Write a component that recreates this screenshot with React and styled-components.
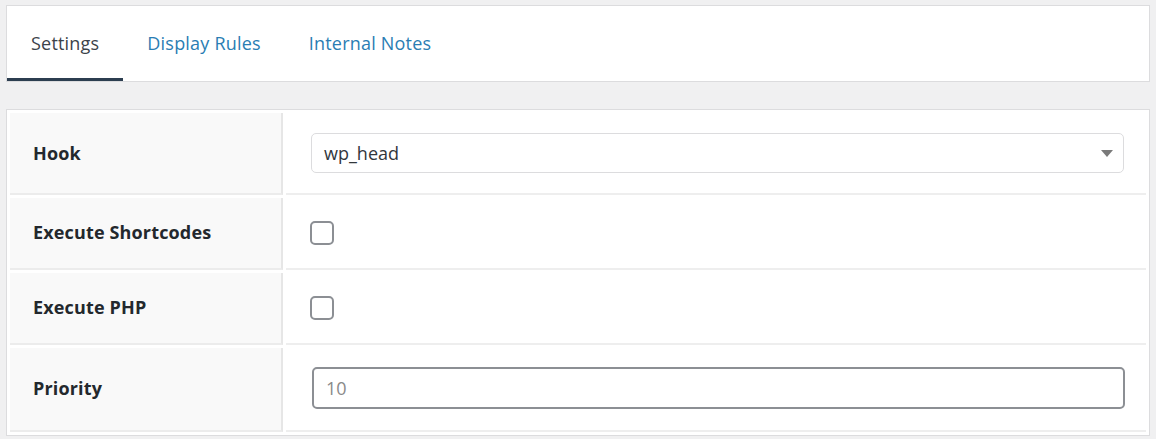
import React from "react";
import styled, { createGlobalStyle } from "styled-components";

const Global = createGlobalStyle`
  html, body { margin: 0; padding: 0; background: #f0f0f1; }
  body { font-family: "Open Sans", "Noto Sans", sans-serif; color: #32373c; }
  * { box-sizing: border-box; }
`;

const Page = styled.div`
  padding: 5px 6px 0 6px;
  display: flex;
  flex-direction: column;
  gap: 27px;
`;

const TabCard = styled.nav`
  background: #fff;
  border: 1px solid #dcdcde;
  height: 77px;
  display: flex;
  align-items: stretch;
`;

const Tab = styled.a`
  display: flex;
  align-items: center;
  padding: 2px 24px 0 24px;
  font-size: 18px;
  letter-spacing: 0.2px;
  text-decoration: none;
  color: ${(p) => (p.$active ? "#3c434a" : "#2a7db3")};
  border-bottom: 3px solid ${(p) => (p.$active ? "#2c3e50" : "transparent")};
  cursor: pointer;
`;

const FormCard = styled.section`
  background: #fff;
  border: 1px solid #dcdcde;
  padding: 3px;
`;

const Table = styled.div`
  display: grid;
  grid-template-columns: 273px 1fr;
  column-gap: 3px;
  row-gap: 3px;
`;

const Label = styled.div`
  background: #f9f9f9;
  border-right: 2px solid #e6e6e6;
  border-bottom: 2px solid #ececec;
  height: ${(p) => p.$h}px;
  display: flex;
  align-items: center;
  padding-left: 23px;
  padding-bottom: ${(p) => (p.$lift ? 2 : 0)}px;
  font-weight: 700;
  font-size: 18px;
  letter-spacing: 0.15px;
  color: #23282d;
`;

const Value = styled.div`
  border-bottom: 2px solid #eeeeee;
  height: ${(p) => p.$h}px;
  display: flex;
  align-items: center;
  padding: 0 22px 0 25px;
`;

const Select = styled.div`
  position: relative;
  width: 100%;
  height: 40px;
  border: 1px solid #dcdcde;
  border-radius: 5px;
  display: flex;
  align-items: center;
  padding-left: 12px;
  font-size: 18px;
  color: #32373c;
`;

const Caret = styled.span`
  position: absolute;
  right: 10px;
  top: 50%;
  margin-top: -3px;
  width: 0;
  height: 0;
  border-left: 6px solid transparent;
  border-right: 6px solid transparent;
  border-top: 7px solid #7a7a7a;
`;

const Checkbox = styled.span`
  display: inline-block;
  width: 24px;
  height: 24px;
  border: 2px solid #8c8f94;
  border-radius: 5px;
  background: #fff;
  margin-left: -1px;
`;

const Input = styled.div`
  width: 100%;
  height: 42px;
  margin: -3px -1px 0 1px;
  border: 2px solid #8c8f94;
  border-radius: 5px;
  display: flex;
  align-items: center;
  padding-left: 12px;
  font-size: 18px;
  color: #8a8a8a;
`;

export default function App() {
  return (
    <>
      <Global />
      <Page>
        <TabCard>
          <Tab $active>Settings</Tab>
          <Tab>Display Rules</Tab>
          <Tab>Internal Notes</Tab>
        </TabCard>
        <FormCard>
          <Table>
            <Label $h={82}>Hook</Label>
            <Value $h={82}>
              <Select>
                wp_head
                <Caret />
              </Select>
            </Value>
            <Label $h={72} $lift>Execute Shortcodes</Label>
            <Value $h={72}>
              <Checkbox />
            </Value>
            <Label $h={72} $lift>Execute PHP</Label>
            <Value $h={72}>
              <Checkbox />
            </Value>
            <Label $h={84} $lift>Priority</Label>
            <Value $h={84}>
              <Input>10</Input>
            </Value>
          </Table>
        </FormCard>
      </Page>
    </>
  );
}
